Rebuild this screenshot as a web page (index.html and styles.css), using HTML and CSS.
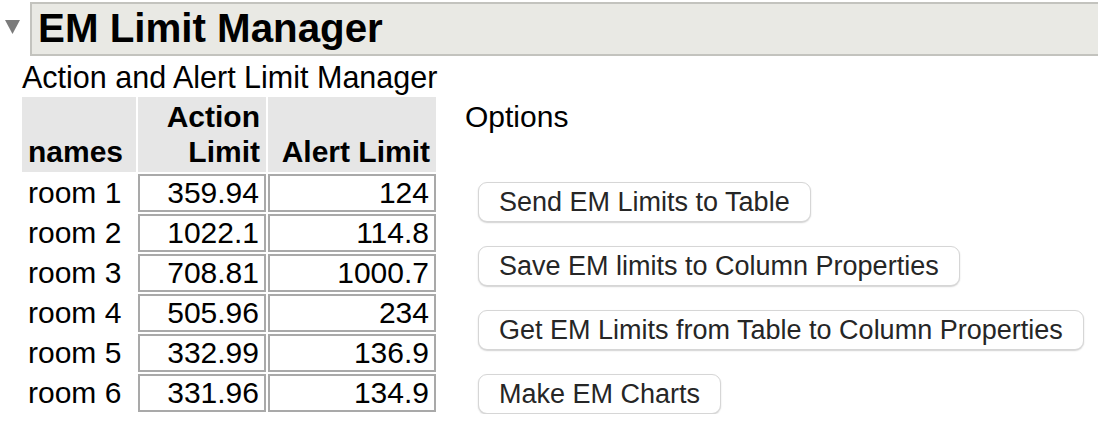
FILE: index.html
```html
<!DOCTYPE html>
<html>
<head>
<meta charset="utf-8">
<link rel="stylesheet" href="styles.css">
</head>
<body>
<div class="page">
  <div class="outline">
    <div class="disclosure">
      <svg width="15" height="14" viewBox="0 0 15 14"><polygon points="0,0 15,0 7.5,14" fill="#7b7b7b"/></svg>
    </div>
    <div class="title-box">EM Limit Manager</div>
  </div>
  <div class="content">
    <div class="left">
      <div class="subtitle">Action and Alert Limit Manager</div>
      <table class="limits">
        <thead>
          <tr>
            <th class="c-name">names</th>
            <th class="c-num">Action<br>Limit</th>
            <th class="c-alert">Alert Limit</th>
          </tr>
        </thead>
        <tbody>
          <tr><td class="name">room 1</td><td class="num">359.94</td><td class="num">124</td></tr>
          <tr><td class="name">room 2</td><td class="num">1022.1</td><td class="num">114.8</td></tr>
          <tr><td class="name">room 3</td><td class="num">708.81</td><td class="num">1000.7</td></tr>
          <tr><td class="name">room 4</td><td class="num">505.96</td><td class="num">234</td></tr>
          <tr><td class="name">room 5</td><td class="num">332.99</td><td class="num">136.9</td></tr>
          <tr><td class="name">room 6</td><td class="num">331.96</td><td class="num">134.9</td></tr>
        </tbody>
      </table>
    </div>
    <div class="right">
      <div class="options-label">Options</div>
      <div class="buttons">
        <button class="btn">Send EM Limits to Table</button>
        <button class="btn">Save EM limits to Column Properties</button>
        <button class="btn">Get EM Limits from Table to Column Properties</button>
        <button class="btn">Make EM Charts</button>
      </div>
    </div>
  </div>
</div>
</body>
</html>
```

FILE: styles.css
```css
html, body {
  margin: 0;
  padding: 0;
  background: #ffffff;
  overflow: hidden;
}
body {
  font-family: "Liberation Sans", Arial, sans-serif;
  color: #000;
}
.page {
  padding-top: 2px;
  width: 1098px;
}
.outline {
  display: flex;
  align-items: flex-start;
}
.disclosure {
  width: 30px;
  padding-top: 18px;
  padding-left: 5px;
  box-sizing: border-box;
}
.disclosure svg {
  display: block;
}
.title-box {
  flex: 1;
  height: 50px;
  line-height: 50px;
  border: 2px solid #c3c3be;
  border-right: none;
  background: #e9e9e4;
  font-size: 40.3px;
  font-weight: bold;
  padding-left: 6px;
  white-space: nowrap;
}
.content {
  display: flex;
  align-items: flex-start;
  margin-top: 4px;
  padding-left: 22px;
}
.left {
  display: flex;
  flex-direction: column;
}
.subtitle {
  font-size: 30.5px;
  line-height: 34px;
  white-space: nowrap;
}
.limits {
  border-collapse: separate;
  border-spacing: 2px;
  margin-left: -2px;
  margin-top: 1px;
  font-size: 30px;
}
.limits th {
  background: #e6e6e6;
  font-weight: bold;
  line-height: 35px;
  padding: 2px 6px 3px 6px;
  vertical-align: bottom;
  white-space: nowrap;
}
.limits th.c-name {
  width: 102px;
  text-align: left;
}
.limits th.c-num {
  width: 116px;
  text-align: right;
}
.limits th.c-alert {
  width: 156px;
  text-align: right;
}
.limits td {
  height: 34px;
  line-height: 34px;
  padding: 0 5px;
  white-space: nowrap;
}
.limits td.name {
  text-align: left;
  padding-left: 6px;
}
.limits td.num {
  text-align: right;
  border: 2px solid #a9a9a9;
}
.right {
  margin-left: 27px;
  padding-top: 40px;
}
.options-label {
  font-size: 30px;
  line-height: 34px;
}
.buttons {
  display: flex;
  flex-direction: column;
  align-items: flex-start;
  gap: 24px;
  margin-top: 48px;
  margin-left: 13px;
}
.btn {
  font-family: "Liberation Sans", Arial, sans-serif;
  font-size: 27px;
  color: #262626;
  background: #ffffff;
  border: 1px solid #d6d6d6;
  border-radius: 9px;
  box-shadow: 0 1px 1.5px rgba(0, 0, 0, 0.18);
  height: 40px;
  line-height: 38px;
  padding: 0 20px;
  margin: 0;
  white-space: nowrap;
  cursor: default;
}
```
